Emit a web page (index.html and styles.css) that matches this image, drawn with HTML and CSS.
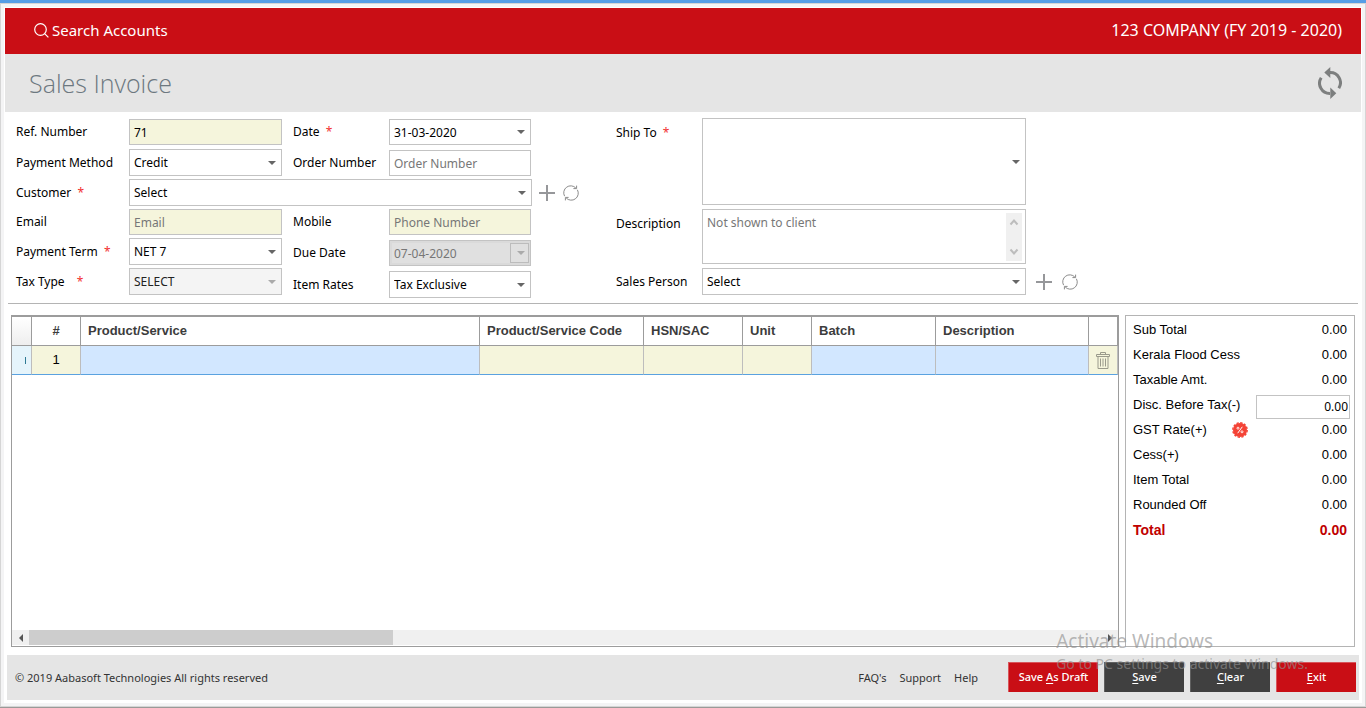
FILE: index.html
```html
<!DOCTYPE html>
<html lang="en">
<head>
<meta charset="utf-8">
<title>Sales Invoice</title>
<link rel="stylesheet" href="styles.css">
</head>
<body>
<svg class="defs" aria-hidden="true">
  <symbol id="plus" viewBox="0 0 16 16"><path d="M8 0v16M0 8h16" fill="none" stroke="#96979a" stroke-width="2"/></symbol>
  <symbol id="reload" viewBox="0 0 16 16"><g fill="none" stroke="#8b8b8b"><path d="M1.600 11.200A7 7 0 0 1 12.800 3M14.400 4.800A7 7 0 0 1 3.200 13"/><path d="M13.600 .6V3.600H10.400M2.400 15.400V12.400H5.600"/></g></symbol>
</svg>
<div class="window">
  <header class="topbar">
    <button class="search" type="button">
      <svg width="15" height="15" viewBox="0 0 15 15"><g fill="none" stroke="#fff" stroke-width="1.200"><circle cx="6.500" cy="6.500" r="5.800"/><path d="M10.600 10.600 14.400 14.400"/></g></svg>
      <span>Search Accounts</span>
    </button>
    <span class="company">123 COMPANY (FY 2019 - 2020)</span>
  </header>
  <div class="titlebar">
    <h1>Sales Invoice</h1>
    <button class="icon-btn" type="button" aria-label="Refresh">
      <svg width="24" height="32" viewBox="0 0 24 32"><g fill="none" stroke="#7d7f7f" stroke-width="3"><path d="M12 5.500A10.200 10.200 0 0 1 20.800 21.200"/><path d="M12 26.500A10.200 10.200 0 0 1 3.200 10.800"/></g><path d="M12.300 0v11L6.300 5.500zM12.300 32V20.600L18.300 26.300z" fill="#7d7f7f"/></svg>
    </button>
  </div>
  <form class="form">
    <div class="main-group">
      <div class="pair">
        <div class="stack">
          <div class="row"><label for="ref">Ref. Number</label><input id="ref" class="box beige" type="text" value="71"></div>
          <div class="row"><label for="method">Payment Method</label><span class="combo"><select id="method" class="box tall"><option>Credit</option></select></span></div>
        </div>
        <div class="stack wide">
          <div class="row"><label for="date">Date <i>*</i></label><span class="combo"><input id="date" class="box" type="text" value="31-03-2020"></span></div>
          <div class="row"><label for="order">Order Number</label><input id="order" class="box" type="text" placeholder="Order Number"></div>
        </div>
      </div>
      <div class="customer">
        <div class="row"><label for="customer">Customer <i>*</i></label><span class="combo"><select id="customer" class="box tall"><option>Select</option></select></span></div>
        <button class="icon-btn" type="button" aria-label="Add customer"><svg width="16" height="16"><use href="#plus"/></svg></button>
        <button class="icon-btn" type="button" aria-label="Reload customers"><svg width="16" height="16"><use href="#reload"/></svg></button>
      </div>
      <div class="pair">
        <div class="stack tight">
          <div class="row"><label for="email">Email</label><input id="email" class="box beige" type="text" placeholder="Email"></div>
          <div class="row"><label for="term">Payment Term <i>*</i></label><span class="combo"><select id="term" class="box tall"><option>NET 7</option></select></span></div>
          <div class="row"><label for="tax">Tax Type <i class="far">*</i></label><span class="combo muted"><select id="tax" class="box tall" disabled><option>SELECT</option></select></span></div>
        </div>
        <div class="stack wide">
          <div class="row"><label for="mobile">Mobile</label><input id="mobile" class="box beige" type="text" placeholder="Phone Number"></div>
          <div class="row"><label for="due">Due Date</label><span class="combo boxed"><input id="due" class="box" type="text" value="07-04-2020" disabled></span></div>
          <div class="row"><label for="rates">Item Rates</label><span class="combo"><select id="rates" class="box tall"><option>Tax Exclusive</option></select></span></div>
        </div>
      </div>
    </div>
    <div class="side-group">
      <div class="row top"><label for="ship">Ship To <i>*</i></label><span class="combo"><select id="ship" class="box ship"><option></option></select></span></div>
      <div class="row top"><label for="desc">Description</label>
        <div class="notes">
          <textarea id="desc" placeholder="Not shown to client"></textarea>
          <svg class="notes-bar" width="16" height="48" viewBox="0 0 16 48"><g fill="none" stroke="#bdbdbd" stroke-width="2"><path d="M4.500 11.500 8 7.500l3.500 4M4.500 36.500 8 40.500l3.500-4"/></g></svg>
        </div>
      </div>
      <div class="row"><label for="person">Sales Person</label><span class="combo"><select id="person" class="box tall"><option>Select</option></select></span></div>
      <button class="icon-btn add" type="button" aria-label="Add sales person"><svg width="16" height="16"><use href="#plus"/></svg></button>
      <button class="icon-btn again" type="button" aria-label="Reload sales persons"><svg width="16" height="16"><use href="#reload"/></svg></button>
    </div>
  </form>
  <main class="work">
    <section class="grid-panel">
      <table>
        <colgroup><col class="c-sel"><col class="c-num"><col><col class="c-code"><col class="c-hsn"><col class="c-unit"><col class="c-batch"><col class="c-desc"><col class="c-del"></colgroup>
        <thead><tr><th class="corner"></th><th class="mid">#</th><th>Product/Service</th><th>Product/Service Code</th><th>HSN/SAC</th><th>Unit</th><th>Batch</th><th>Description</th><th></th></tr></thead>
        <tbody><tr>
          <td class="marker"><span></span></td><td class="ro mid">1</td><td></td><td class="ro"></td><td class="ro"></td><td class="ro"></td><td></td><td></td>
          <td class="ro del"><button class="icon-btn" type="button" aria-label="Delete row"><svg width="14" height="17" viewBox="0 0 14 17"><g fill="none" stroke="#9a9a8c"><path d="M4.500 2.500v-2h5v2M.5 2.500h13v2H.5zM2 4.500v12h10v-12"/><path d="M4.500 6.500v8M7 6.500v8M9.500 6.500v8"/></g></svg></button></td>
        </tr></tbody>
      </table>
      <div class="scroll">
        <span class="arrow left"></span><span class="track"><span class="thumb"></span></span><span class="arrow right"></span>
      </div>
    </section>
    <section class="summary">
      <div class="line"><span>Sub Total</span><span>0.00</span></div>
      <div class="line"><span>Kerala Flood Cess</span><span>0.00</span></div>
      <div class="line"><span>Taxable Amt.</span><span>0.00</span></div>
      <div class="line"><label for="disc">Disc. Before Tax(-)</label><input id="disc" type="text" value="0.00"></div>
      <div class="line"><span class="gst">GST Rate(+)</span><svg width="16" height="16" viewBox="0 0 16 16"><circle cx="8" cy="8" r="7" fill="#f44336"/><circle cx="8" cy="8" r="7.200" fill="none" stroke="#f44336" stroke-width="1.400" stroke-dasharray="2.300 1.470"/><path d="M10.300 4.800 5.700 11.200" stroke="#fff"/><g fill="none" stroke="#fff" stroke-width=".9"><circle cx="6" cy="6.200" r="1"/><circle cx="10" cy="9.800" r="1"/></g></svg><span class="push">0.00</span></div>
      <div class="line"><span>Cess(+)</span><span>0.00</span></div>
      <div class="line"><span>Item Total</span><span>0.00</span></div>
      <div class="line"><span>Rounded Off</span><span>0.00</span></div>
      <div class="line total"><span>Total</span><span>0.00</span></div>
    </section>
  </main>
  <footer class="footer">
    <span class="copy">© 2019 Aabasoft Technologies All rights reserved</span>
    <nav class="links"><a href="#">FAQ's</a><a href="#">Support</a><a href="#">Help</a></nav>
    <div class="actions">
      <button class="red draft" type="button">Save <u>A</u>s Draft</button>
      <button type="button"><u>S</u>ave</button>
      <button type="button"><u>C</u>lear</button>
      <button class="red" type="button"><u>E</u>xit</button>
    </div>
  </footer>
  <div class="watermark"><p class="big">Activate Windows</p><p>Go to PC settings to activate Windows.</p></div>
</div>
</body>
</html>
```
FILE: styles.css
```css
* { box-sizing: border-box; }
body {
  margin: 0;
  font: 12px/16px "Noto Sans", "Open Sans", sans-serif;
  color: #000;
  background: #fff;
}
button, input, select, textarea { font: inherit; color: inherit; margin: 0; }
p, h1 { margin: 0; }
.defs { position: absolute; width: 0; height: 0; }
.window {
  position: relative;
  display: flex;
  flex-direction: column;
  min-height: 100vh;
  padding: 5px;
  border-top: 3px solid #569de5;
  border-bottom: 1px solid #9a9a98;
  background: #fff;
  box-shadow: inset 1px 1px #d5d5d5, inset -1px -1px #d5d5d5, inset 4px 4px #f4f4f5, inset -4px -4px #f4f4f5;
}
.topbar, .titlebar { display: flex; align-items: center; justify-content: space-between; }
.topbar {
  height: 46px;
  padding: 0 19px 2px 29px;
  background: #c90e15;
  color: #fff;
  font-size: 15px;
  line-height: 20px;
}
.company { font-size: 16px; }
.search { display: flex; align-items: center; gap: 3px; padding: 0; border: 0; background: none; }
.titlebar { height: 58px; padding: 0 19px 0 24px; background: #e5e5e5; }
.titlebar h1 { font: 300 25px/36px "Open Sans", sans-serif; color: #6d7880; }
.icon-btn { display: flex; align-items: center; justify-content: center; padding: 0; border: 0; background: none; }

.form {
  display: flex;
  gap: 36px;
  margin: 0 3px;
  padding: 6px 0 5px 8px;
  border-bottom: 1px solid #b4b4b4;
}
.main-group { flex: 564 1 0; padding-top: 1px; }
.side-group {
  flex: 742 1 0;
  display: grid;
  grid-template-columns: 410fr 16px 16px 270fr;
  gap: 4px 10px;
  align-content: start;
}
.pair { display: grid; grid-template-columns: 266fr 238fr; gap: 11px; margin-right: 49px; align-items: start; }
.stack { display: flex; flex-direction: column; gap: 4px; }
.stack.tight { gap: 3px; }
.stack.wide { gap: 5px; }
.row { display: grid; grid-template-columns: 113px 1fr; align-items: center; }
.wide .row { grid-template-columns: 96px 1fr; }
.side-group .row { grid-column: 1; grid-template-columns: 86px 1fr; }
.side-group .row.top { align-items: start; }
.row.top label { padding-top: 7px; }
.row i { margin-left: 3px; font-style: normal; color: #f23030; }
.row i.far { margin-left: 9px; }
.customer { display: grid; grid-template-columns: 1fr 14px 18px; column-gap: 8px; margin: 3px 0; align-items: center; }
.customer svg { flex: none; }
.box {
  display: block;
  width: 100%;
  height: 26px;
  padding: 0 4px;
  border: 1px solid #c3c3c3;
  border-radius: 0;
  background: #fff;
  appearance: none;
}
.box.tall { height: 27px; }
.box.beige { background: #f5f5dc; }
.box.ship { height: 87px; }
.box::placeholder, textarea::placeholder { color: #777; opacity: 1; }
.combo { position: relative; display: block; }
.combo::after {
  content: "";
  position: absolute;
  right: 6px;
  top: calc(50% - 2px);
  border: 4px solid transparent;
  border-top-color: #666;
  border-bottom: 0;
}
.combo .box:disabled { opacity: 1; color: #222; background: #f4f4f4; }
.combo.muted::after, .combo.boxed::after { border-top-color: #aaa; }
.combo.boxed .box { background: #e0e0e0; color: #777; border-color: #c3c3c3; box-shadow: inset 0 0 0 2px #dadada; }
.combo.boxed::before { content: ""; position: absolute; right: 2px; top: 3px; bottom: 3px; width: 17px; border: 1px solid #bcbcbc; }
.notes { display: flex; height: 55px; padding: 3px; border: 1px solid #c3c3c3; }
.notes textarea { flex: 1; min-width: 0; padding: 2px 1px; border: 0; resize: none; overflow: hidden; background: none; }
.notes-bar { background: #f0f0f0; }
.add, .again { grid-row: 3; }
.add { grid-column: 2; }
.again { grid-column: 3; }

.work { flex: 1; display: flex; gap: 6px; margin: 11px 6px 8px; }
.grid-panel {
  flex: 1;
  min-width: 0;
  display: flex;
  flex-direction: column;
  justify-content: space-between;
  border: 1px solid #9c9c9c;
  border-top-width: 2px;
  font: 13px/16px "Liberation Sans", sans-serif;
}
table { width: 100%; table-layout: fixed; border-collapse: separate; border-spacing: 0; }
.c-sel { width: 20px; }
.c-num { width: 49px; }
.c-code { width: 164px; }
.c-hsn { width: 99px; }
.c-unit { width: 69px; }
.c-batch { width: 124px; }
.c-desc { width: 153px; }
.c-del { width: 29px; }
th, td { height: 29px; padding: 0 7px; border-right: 1px solid #9c9c9c; border-bottom: 1px solid #9c9c9c; }
th { text-align: left; color: #3c3c3c; }
.corner { background: linear-gradient(#fff, #eee); }
tbody td { background: #d2e7ff; border-right-color: #bdbdbd; border-bottom-color: #5aa2e0; }
tbody td.ro { background: #f5f5dc; }
tbody td.marker { padding: 0 5px; background: #e5f4fb; }
.marker span { display: block; width: 1px; height: 7px; margin-left: auto; background: #2e7a94; }
th.mid, td.mid { text-align: center; }
td.del { padding: 0; }
.del .icon-btn { width: 100%; }
.scroll { display: flex; height: 15px; margin-bottom: 1px; background: #f0f0f0; }
.arrow { display: flex; align-items: center; justify-content: center; width: 17px; }
.arrow::after { content: ""; border: 4px solid transparent; }
.left::after { border-right-color: #555; border-left: 0; }
.right::after { border-left-color: #555; border-right: 0; }
.track { flex: 1; display: flex; }
.thumb { width: 34%; background: #cdcdcd; }

.summary {
  width: 230px;
  padding: 1px 6px 0 7px;
  border: 1px solid #b4b4b4;
  font: 13px/16px "Liberation Sans", sans-serif;
}
.line { display: flex; align-items: center; justify-content: space-between; height: 25px; }
.line > :last-child { margin-right: 1px; }
.summary .line input {
  width: 94px;
  height: 24px;
  margin: 4px -2px 0 0;
  padding: 0 1px;
  border: 1px solid #c3c3c3;
  text-align: right;
  font: 12px "Noto Sans", sans-serif;
}
.line .gst { width: 99px; }
.line .push { margin-left: auto; }
.line.total { font-size: 14px; font-weight: bold; color: #c00000; }

.footer {
  display: flex;
  align-items: center;
  height: 45px;
  margin: 0 2px 2px;
  padding: 0 3px 0 8px;
  background: #e5e5e5;
  font-size: 11px;
  color: #333;
}
.links { display: flex; gap: 13px; margin: 0 30px 0 auto; }
.links a { color: inherit; text-decoration: none; }
.actions { display: flex; gap: 6px; padding-bottom: 1px; }
.actions button {
  width: 80px;
  height: 30px;
  padding: 0 0 1px;
  border: 1px solid #606060;
  border-width: 1px 0 0 1px;
  background: #404040;
  color: #fff;
  font-weight: 500;
}
.actions .draft { width: 90px; }
.actions .red { background: #c90e15; border-color: #d8545a; }
.actions u { text-underline-offset: 2px; }
.watermark {
  position: absolute;
  right: 58px;
  bottom: 33px;
  color: rgba(145, 145, 145, 0.65);
  font-size: 14px;
  line-height: 20px;
  pointer-events: none;
}
.watermark .big { font-size: 19px; line-height: 26px; }
```
